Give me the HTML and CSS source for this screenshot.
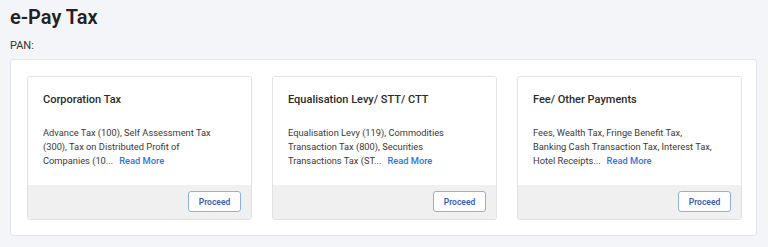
FILE: index.html
```html
<!DOCTYPE html>
<html>
<head>
<meta charset="utf-8">
<link rel="stylesheet" href="styles.css">
</head>
<body>
<h1 class="title">e-Pay Tax</h1>
<div class="pan">PAN:</div>
<div class="panel">
  <div class="card">
    <div class="card-body">
      <div class="card-title">Corporation Tax</div>
      <p class="card-text"><span>Advance Tax (100), Self Assessment Tax (300), Tax on Distributed Profit of Companies (10...</span><a class="more">Read More</a></p>
    </div>
    <div class="card-foot"><button class="btn">Proceed</button></div>
  </div>
  <div class="card">
    <div class="card-body">
      <div class="card-title">Equalisation Levy/ STT/ CTT</div>
      <p class="card-text"><span>Equalisation Levy (119), Commodities Transaction Tax (800), Securities Transactions Tax (ST...</span><a class="more">Read More</a></p>
    </div>
    <div class="card-foot"><button class="btn">Proceed</button></div>
  </div>
  <div class="card">
    <div class="card-body">
      <div class="card-title">Fee/ Other Payments</div>
      <p class="card-text"><span>Fees, Wealth Tax, Fringe Benefit Tax, Banking Cash Transaction Tax, Interest Tax, Hotel Receipts...</span><a class="more">Read More</a></p>
    </div>
    <div class="card-foot"><button class="btn">Proceed</button></div>
  </div>
</div>
</body>
</html>
```
FILE: styles.css
```css
html, body { margin: 0; padding: 0; }
body {
  background: #f4f5f9;
  font-family: Roboto, "Liberation Sans", sans-serif;
  color: #2b2b2b;
  padding: 0 11px 0 10px;
}
.title {
  margin: 0;
  padding-top: 5px;
  font-size: 20px;
  font-weight: 600;
  line-height: 25px;
  color: #222;
}
.pan {
  margin-top: 9px;
  font-size: 11px;
  line-height: 13px;
  color: #333;
}
.panel {
  margin-top: 7px;
  background: #fff;
  border: 1px solid #e3e5ee;
  border-radius: 3px;
  padding: 16px 14px 15px 16px;
  display: grid;
  grid-template-columns: repeat(3, 1fr);
  gap: 20px;
}
.card {
  border: 1px solid #e2e2e6;
  border-radius: 3px;
  display: flex;
  flex-direction: column;
  overflow: hidden;
}
.card-body {
  background: #fff;
  padding: 15px 25px 17px 15px;
}
.card-title {
  font-size: 11px;
  font-weight: 500;
  line-height: 16px;
  color: #2b2b2b;
}
.card-text {
  margin: 18px 0 0 0;
  font-size: 9.3px;
  line-height: 14px;
  color: #3a3a3a;
}
.more {
  color: #2f74e0;
  font-weight: 500;
  margin-left: 6px;
}
.card-foot {
  background: #f0f0f0;
  padding: 6px 10px 7px 10px;
  display: flex;
  justify-content: flex-end;
}
.btn {
  width: 53px;
  height: 21px;
  border: 1px solid #8eb0e6;
  border-radius: 3px;
  background: #fff;
  color: #3a5fb8;
  font-family: Roboto, "Liberation Sans", sans-serif;
  font-size: 8.5px;
  font-weight: 600;
  padding: 0;
}
```
